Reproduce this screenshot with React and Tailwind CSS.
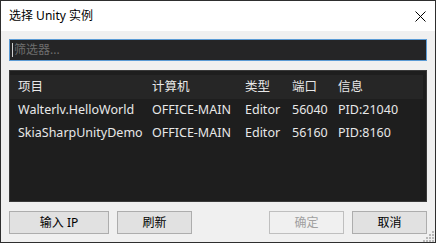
import React from "react";

const font = { fontFamily: '"Noto Sans", "Noto Sans CJK SC", sans-serif' };

function Btn({ children, disabled, className = "" }) {
  return (
    <div
      className={
        "h-[23px] flex items-center justify-center text-[12px] border " +
        (disabled
          ? "border-[#bfbfbf] bg-[#f0f0f0] text-[#a0a0a0] "
          : "border-[#adadad] bg-[#e1e1e1] text-black ") +
        className
      }
    >
      {children}
    </div>
  );
}

const rows = [
  ["Walterlv.HelloWorld", "OFFICE-MAIN", "Editor", "56040", "PID:21040"],
  ["SkiaSharpUnityDemo", "OFFICE-MAIN", "Editor", "56160", "PID:8160"],
];

function Row({ cells, className = "" }) {
  return (
    <div className={"flex items-center h-[23px] pl-[8px] text-[12.5px] " + className}>
      <div className="w-[134px] shrink-0 whitespace-nowrap">{cells[0]}</div>
      <div className="w-[93px] shrink-0 whitespace-nowrap">{cells[1]}</div>
      <div className="w-[47px] shrink-0 whitespace-nowrap">{cells[2]}</div>
      <div className="w-[46px] shrink-0 whitespace-nowrap">{cells[3]}</div>
      <div className="whitespace-nowrap">{cells[4]}</div>
    </div>
  );
}

export default function App() {
  return (
    <div
      className="w-[436px] h-[243px] border border-[#2e2e2e] flex flex-col bg-[#f0f0f0]"
      style={font}
    >
      <div className="h-[30px] bg-white flex items-center justify-between pl-[8px] pr-[9px] shrink-0">
        <span className="text-[12px] text-black">选择 Unity 实例</span>
        <svg width="11" height="11" viewBox="0 0 11 11">
          <path d="M0.5 0.5 L10.5 10.5 M10.5 0.5 L0.5 10.5" stroke="#000" strokeWidth="1" />
        </svg>
      </div>
      <div className="flex-1 flex flex-col px-[8px] pt-[8px] pb-[8px] gap-[9px] relative">
        <div className="h-[22px] border border-[#5b9bd5] bg-[#252526] flex items-center pl-[2px] text-[12px] text-[#6d6d6d]">
          <span className="w-px h-[14px] bg-[#d0d0d0] mr-px"></span>
          筛选器...
        </div>
        <div className="flex-1 border border-[#3a3a3a] bg-[#1e1e1e] text-[#e8e8e8] pr-[3px] pt-[4px]">
          <Row cells={["项目", "计算机", "类型", "端口", "信息"]} className="bg-[#262626] h-[24px]" />
          {rows.map((r, i) => (
            <Row key={i} cells={r} />
          ))}
        </div>
        <div className="flex h-[23px]">
          <Btn className="w-[100px]">输入 IP</Btn>
          <Btn className="w-[75px] ml-[8px]">刷新</Btn>
          <div className="flex-1" />
          <Btn disabled className="w-[75px]">确定</Btn>
          <Btn className="w-[75px] ml-[8px]">取消</Btn>
        </div>
        <svg className="absolute right-0 bottom-0" width="12" height="12" viewBox="0 0 12 12">
          {[[9, 1], [9, 4], [6, 4], [9, 7], [6, 7], [3, 7], [9, 10], [6, 10], [3, 10], [0, 10]].map(([x, y], i) => (
            <rect key={i} x={x} y={y} width="2" height="2" fill="#b8b8b8" />
          ))}
        </svg>
      </div>
    </div>
  );
}
